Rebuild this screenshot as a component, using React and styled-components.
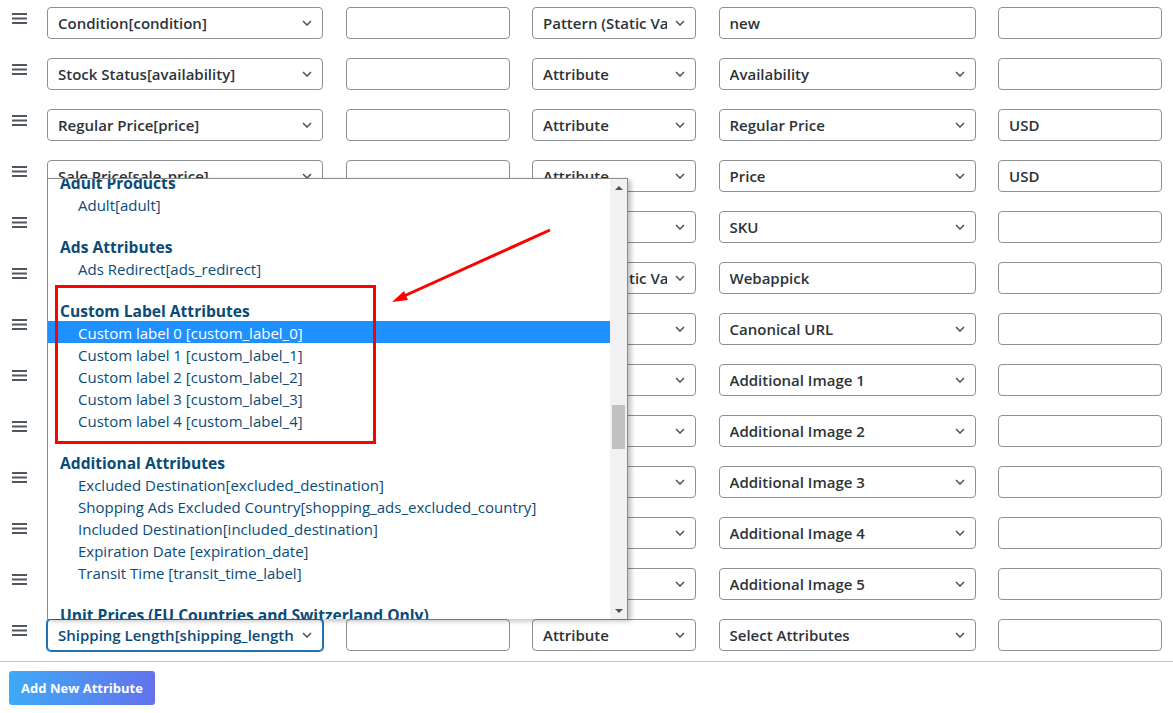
import React from "react";
import styled, { createGlobalStyle } from "styled-components";

const GlobalStyle = createGlobalStyle`
  body {
    margin: 0;
    background: #fff;
    font-family: "Open Sans", "Noto Sans", sans-serif;
    color: #2c3338;
  }
`;

const rows = [
  { attr: "Condition[condition]", type: "Pattern (Static Value)", value: "new", staticValue: true },
  { attr: "Stock Status[availability]", type: "Attribute", value: "Availability" },
  { attr: "Regular Price[price]", type: "Attribute", value: "Regular Price", suffix: "USD" },
  { attr: "Sale Price[sale_price]", type: "Attribute", value: "Price", suffix: "USD" },
  { attr: "SKU[sku]", type: "Attribute", value: "SKU" },
  { attr: "Brand[brand]", type: "Pattern (Static Value)", value: "Webappick", staticValue: true },
  { attr: "Canonical Link[canonical_link]", type: "Attribute", value: "Canonical URL" },
  { attr: "Additional Image 1[image_link_1]", type: "Attribute", value: "Additional Image 1" },
  { attr: "Additional Image 2[image_link_2]", type: "Attribute", value: "Additional Image 2" },
  { attr: "Additional Image 3[image_link_3]", type: "Attribute", value: "Additional Image 3" },
  { attr: "Additional Image 4[image_link_4]", type: "Attribute", value: "Additional Image 4" },
  { attr: "Additional Image 5[image_link_5]", type: "Attribute", value: "Additional Image 5" },
  { attr: "Shipping Length[shipping_length]", type: "Attribute", value: "Select Attributes", open: true },
];

const groups = [
  { label: "Adult Products", options: ["Adult[adult]"] },
  { label: "Ads Attributes", options: ["Ads Redirect[ads_redirect]"] },
  {
    label: "Custom Label Attributes",
    options: [
      "Custom label 0 [custom_label_0]",
      "Custom label 1 [custom_label_1]",
      "Custom label 2 [custom_label_2]",
      "Custom label 3 [custom_label_3]",
      "Custom label 4 [custom_label_4]",
    ],
  },
  {
    label: "Additional Attributes",
    options: [
      "Excluded Destination[excluded_destination]",
      "Shopping Ads Excluded Country[shopping_ads_excluded_country]",
      "Included Destination[included_destination]",
      "Expiration Date [expiration_date]",
      "Transit Time [transit_time_label]",
    ],
  },
  {
    label: "Unit Prices (EU Countries and Switzerland Only)",
    options: ["Unit Price Measure[unit_pricing_measure]", "Unit Price Base Measure[unit_pricing_base_measure]"],
  },
];

const activeOption = "Custom label 0 [custom_label_0]";

const Handle = () => (
  <HandleIcon width="15" height="11" viewBox="0 0 15 11">
    <rect x="0" y="0" width="15" height="2" fill="#50575e" />
    <rect x="0" y="4.5" width="15" height="2" fill="#50575e" />
    <rect x="0" y="9" width="15" height="2" fill="#50575e" />
  </HandleIcon>
);

const Chevron = () => (
  <ChevronIcon width="10" height="6" viewBox="0 0 10 6">
    <polyline points="1,1 5,5 9,1" fill="none" stroke="#50575e" strokeWidth="1.6" />
  </ChevronIcon>
);

const Select = ({ children, $focused }) => (
  <SelectBox $focused={$focused}>
    <SelectText>{children}</SelectText>
    <Chevron />
  </SelectBox>
);

const OptionsDropdown = () => (
  <Dropdown>
    <DropdownViewport>
      <OptionList>
        {groups.map((g) => (
          <Group key={g.label}>
            <GroupLabel>{g.label}</GroupLabel>
            {g.options.map((o) => (
              <OptionItem key={o} $active={o === activeOption}>
                {o}
              </OptionItem>
            ))}
          </Group>
        ))}
      </OptionList>
    </DropdownViewport>
    <ScrollTrack>
      <ScrollArrow $dir="up" />
      <ScrollRail>
        <ScrollThumb />
      </ScrollRail>
      <ScrollArrow $dir="down" />
    </ScrollTrack>
  </Dropdown>
);

const App = () => {
  return (
    <Page>
      <GlobalStyle />
      <AttributeList>
        {rows.map((r) => (
          <Row key={r.attr}>
            <Handle />
            <Cell>
              <Select $focused={r.open}>{r.attr}</Select>
              {r.open && <OptionsDropdown />}
            </Cell>
            <TextInput readOnly value="" />
            <Select>{r.type}</Select>
            {r.staticValue ? <TextInput readOnly value={r.value} /> : <Select>{r.value}</Select>}
            <TextInput readOnly value={r.suffix || ""} />
          </Row>
        ))}
      </AttributeList>
      <Footer>
        <AddButton>Add New Attribute</AddButton>
      </Footer>

      <CalloutBox />
      <CalloutArrow width="1173" height="713" viewBox="0 0 1173 713">
        <line x1="550" y1="230" x2="404" y2="296" stroke="#ff0000" strokeWidth="3" />
        <polygon points="392,302 408,300 404,291" fill="#ff0000" />
      </CalloutArrow>
    </Page>
  );
};

export default App;

const Page = styled.div`
  position: relative;
  width: 1173px;
  height: 713px;
  overflow: hidden;
`;

const AttributeList = styled.div`
  display: flex;
  flex-direction: column;
`;

const Row = styled.div`
  display: grid;
  grid-template-columns: 24.5px 276px 164px 164px 257px 164px;
  column-gap: 22.5px;
  align-items: start;
  height: 51px;
  padding-top: 7px;
  box-sizing: border-box;
  &:last-child {
    height: 49px;
  }
`;

const HandleIcon = styled.svg`
  display: block;
  margin: 6px 0 0 12px;
`;

const Cell = styled.div`
  position: relative;
`;

const SelectBox = styled.div`
  display: flex;
  align-items: center;
  height: 32px;
  box-sizing: border-box;
  padding: 0 10px 0 10px;
  border: 1px solid ${(p) => (p.$focused ? "#2271b1" : "#8c8f94")};
  box-shadow: ${(p) => (p.$focused ? "0 0 0 1px #2271b1" : "none")};
  border-radius: 4px;
  background: #fff;
  color: ${(p) => (p.$focused ? "#0a4b78" : "#2c3338")};
  font-size: 15px;
  font-weight: 600;
`;

const SelectText = styled.span`
  flex: 1;
  min-width: 0;
  overflow: hidden;
  white-space: nowrap;
  margin-right: 8px;
`;

const ChevronIcon = styled.svg`
  flex: none;
  display: block;
`;

const TextInput = styled.input`
  height: 32px;
  box-sizing: border-box;
  width: 100%;
  padding: 0 10px;
  border: 1px solid #8c8f94;
  border-radius: 4px;
  background: #fff;
  color: #2c3338;
  font-family: inherit;
  font-size: 15px;
  font-weight: 600;
  outline: none;
`;

const Footer = styled.div`
  border-top: 1px solid #c3c4c7;
  padding: 9px;
`;

const AddButton = styled.button`
  height: 34px;
  width: 146px;
  border: none;
  border-radius: 3px;
  background: linear-gradient(90deg, #3eaaf7 0%, #6472ec 100%);
  color: #fff;
  font-family: inherit;
  font-size: 13px;
  font-weight: 700;
  padding: 0;
`;

const Dropdown = styled.div`
  position: absolute;
  left: 0;
  bottom: 100%;
  z-index: 10;
  width: 581px;
  height: 441px;
  box-sizing: border-box;
  display: flex;
  background: #fff;
  border: 1px solid #8a8a8a;
  border-bottom: none;
  box-shadow: 3px 2px 5px rgba(0, 0, 0, 0.25);
`;

const DropdownViewport = styled.div`
  flex: 1;
  overflow: hidden;
`;

const OptionList = styled.div`
  margin-top: -8px;
  display: flex;
  flex-direction: column;
  gap: 20px;
`;

const Group = styled.div`
  display: flex;
  flex-direction: column;
`;

const GroupLabel = styled.div`
  height: 22px;
  line-height: 25px;
  padding-left: 12px;
  font-size: 15.6px;
  font-weight: 700;
  color: #0a4b78;
  white-space: nowrap;
`;

const OptionItem = styled.div`
  height: 22px;
  line-height: 25px;
  padding-left: 30px;
  font-size: 15px;
  white-space: nowrap;
  color: ${(p) => (p.$active ? "#fff" : "#0a4b78")};
  background: ${(p) => (p.$active ? "#1e90ff" : "transparent")};
`;

const ScrollTrack = styled.div`
  width: 17px;
  display: flex;
  flex-direction: column;
  background: #f1f1f1;
`;

const ScrollArrow = styled.div`
  height: 17px;
  display: flex;
  align-items: center;
  justify-content: center;
  &::before {
    content: "";
    width: 0;
    height: 0;
    border-left: 4px solid transparent;
    border-right: 4px solid transparent;
    ${(p) =>
      p.$dir === "up"
        ? "border-bottom: 4px solid #505050;"
        : "border-top: 4px solid #505050;"}
  }
`;

const ScrollRail = styled.div`
  flex: 1;
  padding-top: 209px;
`;

const ScrollThumb = styled.div`
  margin: 0 2px;
  height: 44px;
  background: #c1c1c1;
`;

const CalloutBox = styled.div`
  position: absolute;
  left: 55px;
  top: 285px;
  width: 321px;
  height: 159px;
  box-sizing: border-box;
  border: 3px solid #ff0000;
  pointer-events: none;
  z-index: 20;
`;

const CalloutArrow = styled.svg`
  position: absolute;
  left: 0;
  top: 0;
  pointer-events: none;
  z-index: 20;
`;
